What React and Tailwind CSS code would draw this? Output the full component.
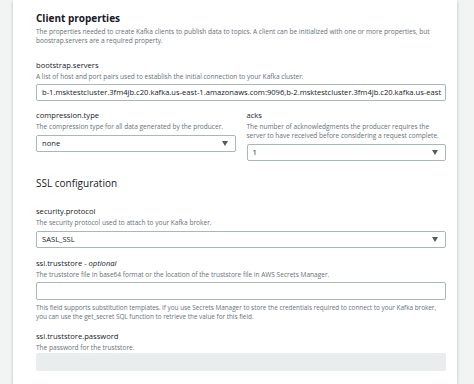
function Caret() {
  return (
    <svg width="6" height="5" viewBox="0 0 6 5" className="shrink-0">
      <path d="M0 0H6L3 5Z" fill="#545b64" />
    </svg>
  );
}

function Field({ label, optional, desc, children, className = "" }) {
  return (
    <div className={className}>
      <div className="text-[7.6px] leading-[11px] text-[#16191f]">
        {label}
        {optional && <span className="italic"> - optional</span>}
      </div>
      {desc && <div className="text-[6.55px] leading-[9px] text-[#687078] mt-[1px]">{desc}</div>}
      {children}
    </div>
  );
}

function Select({ value }) {
  return (
    <div className="mt-[4px] h-[17px] border border-[#aab7b8] rounded-[2px] flex items-center justify-between pl-[5px] pr-[7px] text-[7.6px] text-[#16191f]">
      <span>{value}</span>
      <Caret />
    </div>
  );
}

export default function App() {
  return (
    <div className="w-[474px] h-[384px] bg-[#f2f3f3] overflow-hidden font-['Open_Sans',sans-serif]">
      <div className="ml-[13px] w-[444px] h-full bg-white shadow-[0_1px_3px_rgba(0,28,36,0.25)] pl-[23px] pr-[11px] pt-[10px]">
        <h2 className="text-[10px] leading-[16px] font-bold text-[#16191f]">Client properties</h2>
        <p className="text-[6.55px] leading-[9px] text-[#687078] mt-[1px]">
          The properties needed to create Kafka clients to publish data to topics. A client can be initialized with one or more properties, but boostrap.servers are a required property.
        </p>

        <Field
          className="mt-[15px]"
          label="bootstrap.servers"
          desc="A list of host and port pairs used to establish the initial connection to your Kafka cluster."
        >
          <div className="mt-[3px] h-[17px] border border-[#aab7b8] rounded-[2px] flex items-center px-[5px] text-[7.6px] text-[#16191f] whitespace-nowrap overflow-hidden">
            b-1.msktestcluster.3fm4jb.c20.kafka.us-east-1.amazonaws.com:9096,b-2.msktestcluster.3fm4jb.c20.kafka.us-east
          </div>
        </Field>

        <div className="grid grid-cols-2 gap-[11px] mt-[9px]">
          <Field label="compression.type" desc="The compression type for all data generated by the producer.">
            <Select value="none" />
          </Field>
          <Field
            label="acks"
            desc="The number of acknowledgments the producer requires the server to have received before considering a request complete."
          >
            <Select value="1" />
          </Field>
        </div>

        <h3 className="text-[10px] leading-[16px] text-[#16191f] mt-[14px]">SSL configuration</h3>

        <Field
          className="mt-[15px]"
          label="security.protocol"
          desc="The security protocol used to attach to your Kafka broker."
        >
          <Select value="SASL_SSL" />
        </Field>

        <Field
          className="mt-[10px]"
          label="ssl.truststore"
          optional
          desc="The truststore file in base64 format or the location of the truststore file in AWS Secrets Manager."
        >
          <div className="mt-[3px] h-[18px] border border-[#aab7b8] rounded-[2px]" />
          <p className="text-[6.4px] leading-[9px] text-[#687078] mt-[3px] tracking-[-0.02px]">
            This field supports substitution templates. If you use Secrets Manager to store the credentials required to connect to your Kafka broker, you can use the get_secret SQL function to retrieve the value for this field.
          </p>
        </Field>

        <Field
          className="mt-[10px]"
          label="ssl.truststore.password"
          desc="The password for the truststore."
        >
          <div className="mt-[1px] h-[18px] bg-[#eaeded] rounded-[2px]" />
        </Field>
      </div>
    </div>
  );
}
